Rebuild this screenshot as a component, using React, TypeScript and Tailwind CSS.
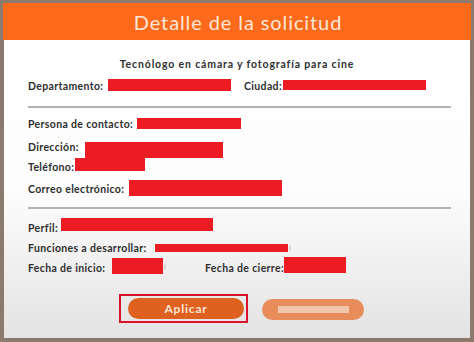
import React from 'react'

const Red: React.FC<{ w: string; h: string; mt?: string; ml?: string }> = ({ w, h, mt = '', ml = '' }) => (
  <div className={`bg-[#ec1c24] shrink-0 ${w} ${h} ${mt} ${ml}`} />
)

const label = "text-[10.5px] leading-[14px] font-bold tracking-[0.35px] text-[#2f2f2f] shrink-0 whitespace-nowrap"

export const App: React.FC = () => {
  return (
    <div className="w-[474px] h-[342px] overflow-hidden bg-[#8c7a6c] flex flex-col pt-[3px] pl-[3px] pr-[3px] pb-[4px]" style={{ fontFamily: 'Lato, "Noto Sans", sans-serif' }}>
      <div className="h-[37px] shrink-0 bg-[#fd6a1b] flex items-center justify-center">
        <h1 className="text-[20px] leading-none tracking-[0.9px] text-[#fbe7d6] pt-[1px] pl-[2px]">Detalle de la solicitud</h1>
      </div>
      <div className="flex-1 ml-[1px] mr-[1px] bg-linear-to-b from-white via-[#fdfdfd] to-[#e3e3e3] flex flex-col pl-[24px] pr-[19px]">
        {/* subtitle */}
        <div className="mt-[17px] h-[14px] flex justify-center pr-[5px]">
          <span className={label + ' text-[10.5px] tracking-[0.85px]'}>Tecnólogo en cámara y fotografía para cine</span>
        </div>
        {/* departamento / ciudad */}
        <div className="mt-[8px] h-[13px] flex items-start">
          <span className={label + ' w-[80px]'}>Departamento:</span>
          <Red w="w-[123px]" h="h-[12px]" />
          <span className={label + ' ml-[13px] w-[39px]'}>Ciudad:</span>
          <Red w="w-[143px]" h="h-[10px]" mt="mt-[1px]" />
        </div>
        <div className="mt-[14px] h-[2px] bg-[#b3b3b3]" />
        {/* persona */}
        <div className="mt-[9px] h-[14px] flex items-start">
          <span className={label + ' w-[109px]'}>Persona de contacto:</span>
          <Red w="w-[104px]" h="h-[11px]" mt="mt-[1px]" />
        </div>
        {/* direccion */}
        <div className="mt-[9px] h-[18px] flex items-start">
          <span className={label + ' w-[57px]'}>Dirección:</span>
          <Red w="w-[138px]" h="h-[16px]" mt="mt-[2px]" />
        </div>
        {/* telefono */}
        <div className="h-[16px] flex items-start">
          <span className={label + ' w-[47px] mt-[2px]'}>Teléfono:</span>
          <Red w="w-[70px]" h="h-[13px]" />
        </div>
        {/* correo */}
        <div className="mt-[6px] h-[16px] flex items-start">
          <span className={label + ' w-[101px] mt-[2px]'}>Correo electrónico:</span>
          <Red w="w-[153px]" h="h-[16px]" />
        </div>
        <div className="mt-[11px] h-[2px] bg-[#b3b3b3]" />
        {/* perfil */}
        <div className="mt-[9px] h-[14px] flex items-start">
          <span className={label + ' w-[33px] mt-[3px]'}>Perfil:</span>
          <Red w="w-[152px]" h="h-[13px]" />
        </div>
        {/* funciones */}
        <div className="mt-[9px] h-[14px] flex items-start">
          <span className={label + ' w-[127px]'}>Funciones a desarrollar:</span>
          <Red w="w-[133px]" h="h-[8px]" mt="mt-[3px]" />
          <div className="w-[2px] h-[6px] mt-[4px] ml-[1px] bg-[#d9d9d9]" />
        </div>
        {/* fechas */}
        <div className="mt-[2px] h-[17px] flex items-start">
          <span className={label + ' w-[84px] mt-[4px]'}>Fecha de inicio:</span>
          <Red w="w-[51px]" h="h-[16px]" mt="mt-[1px]" />
          <div className="w-[2px] h-[6px] mt-[7px] ml-[1px] bg-[#d9d9d9]" />
          <span className={label + ' ml-[39px] w-[79px] mt-[4px]'}>Fecha de cierre:</span>
          <Red w="w-[62px]" h="h-[16px]" />
        </div>
        {/* buttons */}
        <div className="mt-[20px] flex items-start">
          <div className="ml-[91px] w-[129px] h-[29px] border-2 border-[#d8142c] flex items-center pl-[7px] pr-[2px]">
            <button className="w-[116px] h-[21px] rounded-full bg-[#df611f] text-[#fbe4d4] text-[12px] font-bold tracking-[0.8px] flex items-center justify-center">
              Aplicar
            </button>
          </div>
          <button className="ml-[14px] mt-[5px] w-[102px] h-[21px] rounded-full bg-[#e88c5b] flex items-center justify-center">
            <span className="block w-[71px] h-[7px] bg-[#f2c6ad]" />
          </button>
        </div>
      </div>
    </div>
  )
}

export default App
